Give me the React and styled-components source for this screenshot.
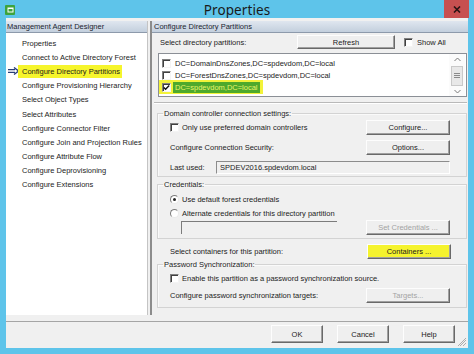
import React from 'react';
import styled, { createGlobalStyle, css } from 'styled-components';

// MIIS "Properties" dialog - Configure Directory Partitions page

const GlobalStyle = createGlobalStyle`
  html, body {
    margin: 0;
    padding: 0;
    background: #5ec4ea;
  }
`;

const Window = styled.div`
  width: 474px;
  height: 354px;
  box-sizing: border-box;
  background: #5ec4ea;
  display: flex;
  flex-direction: column;
  padding: 0 6px 6px 6px;
  font-family: "Liberation Sans", Arial, sans-serif;
  font-size: 7.5px;
  color: #1c1c1c;
`;

const TitleBar = styled.div`
  height: 18px;
  flex: none;
  margin: 0 -6px;
  display: grid;
  grid-template-columns: 1fr auto 1fr;
  align-items: center;
  padding: 0 5px;
`;

const AppIcon = styled.div`
  width: 10px;
  height: 10px;
  background: #3ea33c;
  border-radius: 1px;
  display: flex;
  align-items: center;
  justify-content: center;
`;

const Title = styled.div`
  font-family: "Noto Sans", "Open Sans", sans-serif;
  font-size: 13.5px;
  color: #1a1a1a;
  letter-spacing: 0.1px;
  padding-top: 1px;
`;

const CloseButton = styled.div`
  justify-self: end;
  align-self: start;
  width: 25px;
  height: 18px;
  background: #c75050;
  display: flex;
  align-items: center;
  justify-content: center;
`;

const Body = styled.div`
  flex: 1;
  background: #f0f0f0;
  display: flex;
  flex-direction: column;
  padding-top: 3px;
`;

const Main = styled.div`
  flex: 1;
  display: flex;
`;

const LeftPane = styled.div`
  width: 141px;
  display: flex;
  flex-direction: column;
  border-right: 1px solid #c4c4c4;
`;

const Splitter = styled.div`
  width: 2px;
`;

const RightPane = styled.div`
  flex: 1;
  display: flex;
  flex-direction: column;
  border-left: 2px solid #8c8c8c;
`;

const PaneHeader = styled.div`
  height: 11px;
  flex: none;
  display: flex;
  align-items: center;
  padding-left: ${p => p.$indent || 1}px;
  background: linear-gradient(#dfe6ef, #c3cfdd);
  border-bottom: 1px solid #8d9aab;
  color: #1b2330;
`;

const NavList = styled.div`
  flex: 1;
  background: #fff;
  padding-top: 3px;
  display: flex;
  flex-direction: column;
`;

const NavItem = styled.div`
  height: 14.2px;
  display: flex;
  align-items: center;
  padding-left: 1px;
`;

const Pointer = styled.div`
  width: 12px;
  display: flex;
  align-items: center;
  justify-content: center;
`;

const NavLabel = styled.span`
  padding: 2px 2px 2px ${p => (p.$active ? 4 : 3)}px;
  margin-left: ${p => (p.$active ? -1 : 0)}px;
  background: ${p => (p.$active ? '#f6f52c' : 'transparent')};
`;

const RightContent = styled.div`
  flex: 1;
  display: flex;
  flex-direction: column;
  padding: 0 1px 0 5px;
`;

const TopRow = styled.div`
  margin-top: 2px;
  display: grid;
  grid-template-columns: 1fr 98px 72px;
  align-items: center;
  height: 14px;
  padding-left: 3px;
`;

const Button = styled.div`
  box-sizing: border-box;
  height: ${p => p.$h || 15}px;
  width: ${p => p.$w || 84}px;
  background: ${p => (p.$highlight ? '#f5f32e' : '#efefef')};
  color: ${p => (p.$disabled ? '#a3a3a3' : '#1c1c1c')};
  border: 1px solid;
  border-color: #fdfdfd #696969 #696969 #fdfdfd;
  box-shadow: inset -1px -1px 0 #a0a0a0;
  display: flex;
  align-items: center;
  justify-content: center;
  flex: none;
`;

const CheckRow = styled.label`
  display: flex;
  align-items: center;
  height: 9px;
  gap: ${p => p.$gap || 4}px;
  padding-left: ${p => p.$indent || 0}px;
`;

const Box = styled.span`
  box-sizing: border-box;
  width: 9px;
  height: 9px;
  flex: none;
  background: #fff;
  border: 1px solid;
  border-color: #808080 #f4f4f4 #f4f4f4 #808080;
  box-shadow: inset 1px 1px 0 #404040;
  display: flex;
  align-items: center;
  justify-content: center;
`;

const Radio = styled.span`
  box-sizing: border-box;
  width: 9px;
  height: 9px;
  flex: none;
  border-radius: 50%;
  background: #fff;
  border: 1px solid;
  border-color: #7b7b7b #eaeaea #eaeaea #7b7b7b;
  display: flex;
  align-items: center;
  justify-content: center;
  &::after {
    content: '';
    width: 3px;
    height: 3px;
    border-radius: 50%;
    background: ${p => (p.$on ? '#222' : 'transparent')};
  }
`;

const ListBox = styled.div`
  margin: 4px 0 0 1px;
  height: 44px;
  box-sizing: border-box;
  background: #fff;
  border: 1px solid #8b8f96;
  display: flex;
`;

const ListItems = styled.div`
  flex: 1;
  padding-top: 3px;
  display: flex;
  flex-direction: column;
`;

const ListItem = styled.div`
  height: 12px;
  display: flex;
  align-items: center;
  padding-left: 3px;
  gap: 2px;
  align-self: flex-start;
  ${p =>
    p.$selected &&
    css`
      background: #f3f33a;
      padding: 1px 3px 1px 3px;
      margin-top: -1px;
    `}
`;

const ItemText = styled.span`
  padding: 1px 2px;
  ${p =>
    p.$selected &&
    css`
      background: #4ea92c;
      color: #e9f46a;
    `}
`;

const ScrollBar = styled.div`
  width: 16px;
  margin-right: 1px;
  background: #fbfbfb;
  display: flex;
  flex-direction: column;
  align-items: center;
  justify-content: space-between;
  padding: 3px 0 2px;
`;

const Thumb = styled.div`
  width: 12px;
  height: 20px;
  box-sizing: border-box;
  background: #e8e8e8;
  border: 1px solid #c9c9c9;
  display: flex;
  align-items: center;
  justify-content: center;
`;

const Separator = styled.div`
  margin: 5px 0 0 -3px;
  border-top: 1px solid #b9b9b9;
  border-bottom: 1px solid #fff;
`;

const Group = styled.fieldset`
  margin: ${p => p.$top || 0}px 0 0 0;
  padding: ${p => p.$pt || 0}px 16px ${p => p.$pb || 0}px 12px;
  border: 1px solid #d3d3d3;
  box-shadow: inset 1px 1px 0 #fafafa;
  display: flex;
  flex-direction: column;
  gap: ${p => p.$gap || 5}px;
  min-width: 0;
`;

const Legend = styled.legend`
  padding: 0 1px;
  margin-left: -7px;
  line-height: 9px;
`;

const FieldRow = styled.div`
  display: flex;
  align-items: center;
  justify-content: space-between;
  gap: 6px;
`;

const LabelCell = styled.span`
  width: ${p => p.$w || 'auto'}px;
  flex: none;
`;

const ReadOnlyBox = styled.div`
  flex: 1;
  height: 13px;
  box-sizing: border-box;
  background: #f0f0f0;
  border-top: 1px solid #8c8c8c;
  border-left: 1px solid #8c8c8c;
  border-bottom: 1px solid #fff;
  border-right: 1px solid #fff;
  display: flex;
  align-items: center;
  padding-left: 3px;
`;

const CredRow = styled.div`
  display: flex;
  align-items: flex-start;
  justify-content: space-between;
  padding-left: 11px;
  margin-top: -3.5px;
`;

const CredInput = styled.div`
  width: 156px;
  height: 13px;
  box-sizing: border-box;
  background: #f0f0f0;
  border-top: 1px solid #7c7c7c;
  border-left: 1px solid #7c7c7c;
  margin-top: 1px;
`;

const LooseRow = styled.div`
  margin: 5px 0 0 0;
  padding: 0 16px 0 13px;
  display: flex;
  align-items: center;
  justify-content: space-between;
`;

const Footer = styled.div`
  box-sizing: border-box;
  margin-top: 6px;
  border-top: 1px solid #a5a5a5;
  height: 27px;
  display: flex;
  justify-content: flex-end;
  align-items: flex-start;
  gap: 14px;
  padding: 3px 13px 0 0;
  position: relative;
`;

const Grip = styled.svg`
  position: absolute;
  right: 1px;
  bottom: 1px;
`;

const navItems = [
  'Properties',
  'Connect to Active Directory Forest',
  'Configure Directory Partitions',
  'Configure Provisioning Hierarchy',
  'Select Object Types',
  'Select Attributes',
  'Configure Connector Filter',
  'Configure Join and Projection Rules',
  'Configure Attribute Flow',
  'Configure Deprovisioning',
  'Configure Extensions',
];

const partitions = [
  { dn: 'DC=DomainDnsZones,DC=spdevdom,DC=local' },
  { dn: 'DC=ForestDnsZones,DC=spdevdom,DC=local' },
  { dn: 'DC=spdevdom,DC=local', checked: true, selected: true },
];

const Tick = () => (
  <svg width="7" height="7" viewBox="0 0 7 7">
    <path d="M0.8 3.4 L2.6 5.2 L6.2 1.4" stroke="#111" strokeWidth="1.4" fill="none" />
  </svg>
);

const Arrow = () => (
  <svg width="11" height="8" viewBox="0 0 11 8">
    <path d="M0 2.6 H7 M0 5.4 H7" stroke="#2a3f78" strokeWidth="1.3" />
    <path d="M6 0.5 L10.5 4 L6 7.5" stroke="#2a3f78" strokeWidth="1.4" fill="none" />
  </svg>
);

const App = () => {
  return (
    <>
      <GlobalStyle />
      <Window>
        <TitleBar>
          <AppIcon>
            <svg width="7" height="6" viewBox="0 0 7 6">
              <rect x="0.5" y="0.5" width="6" height="5" fill="#fff" />
              <rect x="1.5" y="2" width="4" height="2.5" fill="#3ea33c" />
            </svg>
          </AppIcon>
          <Title>Properties</Title>
          <CloseButton>
            <svg width="8" height="7" viewBox="0 0 8 7">
              <path d="M1 0.5 L7 6.5 M7 0.5 L1 6.5" stroke="#2a1414" strokeWidth="1.6" />
            </svg>
          </CloseButton>
        </TitleBar>

        <Body>
          <Main>
            <LeftPane>
              <PaneHeader>Management Agent Designer</PaneHeader>
              <NavList>
                {navItems.map((name, i) => {
                  const active = i === 2;
                  return (
                    <NavItem key={name}>
                      <Pointer>{active && <Arrow />}</Pointer>
                      <NavLabel $active={active}>{name}</NavLabel>
                    </NavItem>
                  );
                })}
              </NavList>
            </LeftPane>
            <Splitter />
            <RightPane>
              <PaneHeader $indent={2}>Configure Directory Partitions</PaneHeader>
              <RightContent>
                <TopRow>
                  <span>Select directory partitions:</span>
                  <Button $w={98} $h={14}>Refresh</Button>
                  <CheckRow $indent={9}>
                    <Box />
                    Show All
                  </CheckRow>
                </TopRow>

                <ListBox>
                  <ListItems>
                    {partitions.map(p => (
                      <ListItem key={p.dn} $selected={p.selected}>
                        <Box>{p.checked && <Tick />}</Box>
                        <ItemText $selected={p.selected}>{p.dn}</ItemText>
                      </ListItem>
                    ))}
                  </ListItems>
                  <ScrollBar>
                    <svg width="7" height="5" viewBox="0 0 7 5">
                      <path d="M0.5 4 L3.5 1 L6.5 4" stroke="#7a7a7a" fill="none" />
                    </svg>
                    <Thumb>
                      <svg width="6" height="5" viewBox="0 0 6 5">
                        <path d="M0 0.5 H6 M0 2.5 H6 M0 4.5 H6" stroke="#8a8a8a" />
                      </svg>
                    </Thumb>
                    <svg width="7" height="5" viewBox="0 0 7 5">
                      <path d="M0.5 1 L3.5 4 L6.5 1" stroke="#7a7a7a" fill="none" />
                    </svg>
                  </ScrollBar>
                </ListBox>

                <Separator />

                <Group $top={5} $pt={1.5} $pb={2} $gap={5.5}>
                  <Legend>Domain controller connection settings:</Legend>
                  <FieldRow>
                    <CheckRow $gap={3}>
                      <Box />
                      Only use preferred domain controllers
                    </CheckRow>
                    <Button>Configure...</Button>
                  </FieldRow>
                  <FieldRow>
                    <span>Configure Connection Security:</span>
                    <Button>Options...</Button>
                  </FieldRow>
                  <FieldRow>
                    <LabelCell $w={40}>Last used:</LabelCell>
                    <ReadOnlyBox>SPDEV2016.spdevdom.local</ReadOnlyBox>
                  </FieldRow>
                </Group>

                <Group $top={3.5} $pt={6} $pb={3} $gap={5}>
                  <Legend>Credentials:</Legend>
                  <CheckRow $gap={3}>
                    <Radio $on />
                    Use default forest credentials
                  </CheckRow>
                  <CheckRow $gap={3}>
                    <Radio />
                    Alternate credentials for this directory partition
                  </CheckRow>
                  <CredRow>
                    <CredInput />
                    <Button $disabled>Set Credentials ...</Button>
                  </CredRow>
                </Group>

                <LooseRow>
                  <span>Select containers for this partition:</span>
                  <Button $highlight>Containers ...</Button>
                </LooseRow>

                <Group $top={1.5} $pt={5} $pb={4} $gap={4.5}>
                  <Legend>Password Synchronization:</Legend>
                  <CheckRow $gap={3}>
                    <Box />
                    Enable this partition as a password synchronization source.
                  </CheckRow>
                  <FieldRow>
                    <span>Configure password synchronization targets:</span>
                    <Button $disabled>Targets...</Button>
                  </FieldRow>
                </Group>
              </RightContent>
            </RightPane>
          </Main>

          <Footer>
            <Button $w={52} $h={18}>OK</Button>
            <Button $w={52} $h={18}>Cancel</Button>
            <Button $w={52} $h={18}>Help</Button>
            <Grip width="9" height="9" viewBox="0 0 9 9">
              <path d="M8 2 L2 8 M8 5 L5 8 M8 0 L0 8" stroke="#9a9a9a" strokeWidth="0.8" />
            </Grip>
          </Footer>
        </Body>
      </Window>
    </>
  );
};

export default App;
